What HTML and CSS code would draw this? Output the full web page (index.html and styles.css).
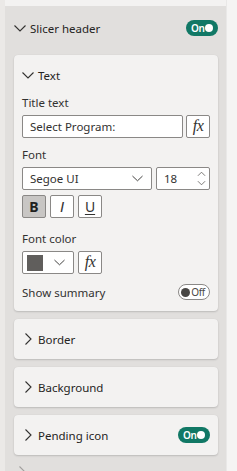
FILE: index.html
```html
<!DOCTYPE html>
<html lang="en">
<head>
<meta charset="utf-8">
<title>Format pane</title>
<link rel="stylesheet" href="styles.css">
</head>
<body>
<div class="page">
  <div class="left-strip"></div>
  <div class="pane">
    <div class="pane-cap"></div>
    <div class="section">
      <div class="sec-head">
        <svg class="chev" viewBox="0 0 12 12"><polyline points="0.5,3.5 6,9 11.5,3.5"/></svg>
        <span class="sec-title">Slicer header</span>
        <span class="toggle on"><span class="tg-text">On</span><span class="knob"></span></span>
      </div>
      <div class="cards">
        <div class="card">
          <div class="card-head">
            <svg class="chev" viewBox="0 0 12 12"><polyline points="0.5,3.5 6,9 11.5,3.5"/></svg>
            <span class="card-title">Text</span>
          </div>
          <div class="card-body">
            <div class="label">Title text</div>
            <div class="row">
              <div class="input wide">Select Program:</div>
              <div class="btn fx">fx</div>
            </div>
            <div class="label gap-font">Font</div>
            <div class="row gap4">
              <div class="input dropdown">
                <span>Segoe UI</span>
                <svg class="dd-chev" viewBox="0 0 12 7"><polyline points="0.5,0.8 6,6 11.5,0.8"/></svg>
              </div>
              <div class="input size">
                <span>18</span>
                <svg class="spin" viewBox="0 0 10 16"><polyline points="1,5 5,1 9,5"/><polyline points="1,11 5,15 9,11"/></svg>
              </div>
            </div>
            <div class="row gap4 styles">
              <div class="btn sq pressed"><b>B</b></div>
              <div class="btn sq ital">I</div>
              <div class="btn sq under">U</div>
            </div>
            <div class="label gap-color">Font color</div>
            <div class="row gap4">
              <div class="input picker">
                <span class="swatch"></span>
                <svg class="dd-chev" viewBox="0 0 12 7"><polyline points="0.5,0.8 6,6 11.5,0.8"/></svg>
              </div>
              <div class="btn fx">fx</div>
            </div>
            <div class="summary">
              <span class="label-inline">Show summary</span>
              <span class="toggle off"><span class="knob"></span><span class="tg-text">Off</span></span>
            </div>
          </div>
        </div>
        <div class="card">
          <div class="card-head">
            <svg class="chev" viewBox="0 0 12 12"><polyline points="3.5,0.5 9,6 3.5,11.5"/></svg>
            <span class="card-title">Border</span>
          </div>
        </div>
        <div class="card">
          <div class="card-head">
            <svg class="chev" viewBox="0 0 12 12"><polyline points="3.5,0.5 9,6 3.5,11.5"/></svg>
            <span class="card-title">Background</span>
          </div>
        </div>
        <div class="card">
          <div class="card-head">
            <svg class="chev" viewBox="0 0 12 12"><polyline points="3.5,0.5 9,6 3.5,11.5"/></svg>
            <span class="card-title">Pending icon</span>
            <span class="toggle on"><span class="tg-text">On</span><span class="knob"></span></span>
          </div>
        </div>
      </div>
      <div class="next-head">
        <svg class="chev faint" viewBox="0 0 12 12"><polyline points="3.5,0.5 9,6 3.5,11.5"/></svg>
      </div>
    </div>
  </div>
  <div class="right-strip"></div>
</div>
</body>
</html>
```
FILE: styles.css
```css
* { box-sizing: border-box; }
html, body { margin: 0; padding: 0; }
body {
  background: #f3f2f1;
  font-family: "Noto Sans", "Open Sans", sans-serif;
  color: #323130;
  font-size: 11px;
  overflow: hidden;
}
.page {
  display: flex;
  width: 237px;
  height: 471px;
  overflow: hidden;
}
.left-strip {
  width: 5px;
  flex: none;
  background: #ebe9e7;
}
.pane {
  width: 221px;
  flex: none;
  display: flex;
  flex-direction: column;
  background: #e1dfdd;
  overflow: hidden;
}
.pane > * { flex: none; }
.pane-cap {
  height: 6px;
  background: #f3f2f1;
}
.right-strip {
  flex: 1;
  background: #f5f4f3;
  border-left: 1px solid #e9e8e7;
}
.section {
  display: flex;
  flex-direction: column;
}
.section > * { flex: none; }
.sec-head {
  height: 44px;
  display: flex;
  align-items: center;
  padding: 0 8px 0 9px;
  gap: 4px;
}
.chev {
  width: 12px;
  height: 12px;
  flex: none;
  fill: none;
  stroke: #323130;
  stroke-width: 1.1;
}
.chev.faint { stroke: #a19f9d; }
.sec-title {
  font-size: 11.5px;
  color: #252423;
  flex: 1;
}
.cards {
  margin: 5px 8px 0 9px;
  display: flex;
  flex-direction: column;
  gap: 8px;
}
.card {
  flex: none;
  background: #f3f2f1;
  border-radius: 4px;
  box-shadow: 0 1px 2px rgba(0, 0, 0, 0.16), 0 0 1px rgba(0, 0, 0, 0.08);
}
.card-head {
  height: 40px;
  display: flex;
  align-items: center;
  padding: 0 8px;
  gap: 4px;
}
.card-title {
  font-size: 11.5px;
  color: #252423;
  flex: 1;
}
.card-body {
  padding: 0 8px 11px;
  display: flex;
  flex-direction: column;
}
.label {
  line-height: 16px;
  margin-bottom: 4px;
  font-size: 11.5px;
}
.gap-font { margin-top: 9px; }
.gap-color { margin-top: 13px; }
.row {
  display: flex;
  gap: 3px;
}
.row.gap4 { gap: 4px; }
.styles { margin-top: 5px; }
.input {
  height: 23px;
  background: #fff;
  border: 1px solid #8a8886;
  border-radius: 2px;
  display: flex;
  align-items: center;
  padding: 0 7px;
  font-size: 11.5px;
  color: #323130;
}
.wide { flex: 1; }
.dropdown {
  width: 130px;
  justify-content: space-between;
  padding-right: 8px;
}
.dd-chev {
  width: 11px;
  height: 7px;
  fill: none;
  stroke: #323130;
  stroke-width: 1;
}
.size {
  flex: 1;
  justify-content: space-between;
  padding-right: 3px;
}
.spin {
  width: 9px;
  height: 15px;
  fill: none;
  stroke: #605e5c;
  stroke-width: 0.9;
}
.btn {
  height: 23px;
  width: 24px;
  flex: none;
  background: #fff;
  border: 1px solid #8a8886;
  border-radius: 2px;
  display: flex;
  align-items: center;
  justify-content: center;
  color: #323130;
}
.fx {
  font-family: "Liberation Serif", "DejaVu Serif", serif;
  font-style: italic;
  font-size: 16px;
  letter-spacing: -0.5px;
  padding-bottom: 1px;
}
.sq { font-size: 14px; }
.pressed {
  background: #c8c6c4;
  border-color: #8a8886;
  color: #201f1e;
}
.pressed b { font-weight: 700; }
.ital {
  font-style: italic;
  font-family: "Liberation Sans", sans-serif;
  font-size: 15px;
}
.under {
  text-decoration: underline;
  text-underline-offset: 2px;
}
.picker {
  width: 52px;
  padding: 0 4px;
  justify-content: space-between;
  padding-right: 4px;
}
.swatch {
  width: 16px;
  height: 16px;
  background: #605e5c;
}
.picker .dd-chev { margin-right: 4px; }
.summary {
  margin-top: 10px;
  height: 16px;
  display: flex;
  align-items: center;
  justify-content: space-between;
}
.label-inline { font-size: 11.5px; }
.toggle {
  width: 32px;
  height: 16px;
  flex: none;
  border-radius: 8px;
  display: flex;
  align-items: center;
  justify-content: space-between;
  font-size: 10px;
}
.toggle.on {
  background: #117865;
  color: #fff;
  padding: 0 5px 0 5px;
  font-weight: 600;
}
.toggle.on .knob {
  width: 8px;
  height: 8px;
  border-radius: 50%;
  background: #fff;
}
.toggle.off {
  background: #fff;
  border: 1px solid #8a8886;
  padding: 0 4px 0 2px;
  color: #484644;
}
.toggle.off .knob {
  width: 9px;
  height: 9px;
  border-radius: 50%;
  background: #484644;
}
.tg-text { line-height: 14px; letter-spacing: -0.3px; }
.next-head {
  height: 30px;
  padding: 11px 0 0 11px;
}
```
